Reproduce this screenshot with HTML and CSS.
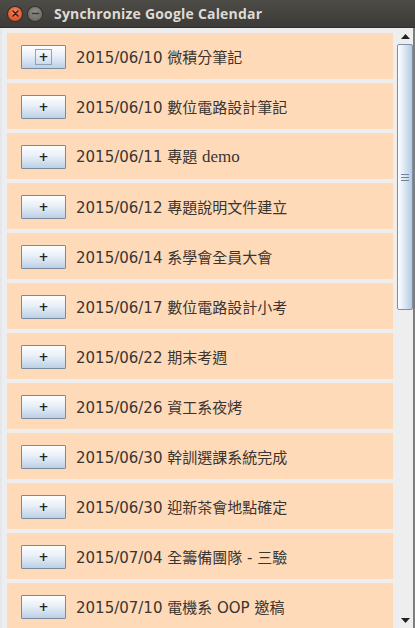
FILE: index.html
```html
<!DOCTYPE html>
<html lang="zh-Hant">
<head>
<meta charset="utf-8">
<title>Synchronize Google Calendar</title>
<link rel="stylesheet" href="styles.css">
</head>
<body>
<div class="window">
  <header class="titlebar">
    <span class="wbtn close"><svg width="9" height="9" viewBox="0 0 9 9"><path d="M2 2 L7 7 M7 2 L2 7" stroke="#3a1a10" stroke-width="1.4" stroke-linecap="round"/></svg></span>
    <span class="wbtn minimize"><svg width="9" height="9" viewBox="0 0 9 9"><path d="M1.5 4.5 H7.5" stroke="#3b3b38" stroke-width="1.6" stroke-linecap="round"/></svg></span>
    <span class="title">Synchronize Google Calendar</span>
  </header>
  <div class="body">
    <main class="list">
      <div class="row"><button class="add focused"><span class="plus">+</span></button><span class="label">2015/06/10 微積分筆記</span></div>
      <div class="row"><button class="add"><span class="plus">+</span></button><span class="label">2015/06/10 數位電路設計筆記</span></div>
      <div class="row"><button class="add"><span class="plus">+</span></button><span class="label">2015/06/11 專題 <span class="serif">demo</span></span></div>
      <div class="row"><button class="add"><span class="plus">+</span></button><span class="label">2015/06/12 專題說明文件建立</span></div>
      <div class="row"><button class="add"><span class="plus">+</span></button><span class="label">2015/06/14 系學會全員大會</span></div>
      <div class="row"><button class="add"><span class="plus">+</span></button><span class="label">2015/06/17 數位電路設計小考</span></div>
      <div class="row"><button class="add"><span class="plus">+</span></button><span class="label">2015/06/22 期末考週</span></div>
      <div class="row"><button class="add"><span class="plus">+</span></button><span class="label">2015/06/26 資工系夜烤</span></div>
      <div class="row"><button class="add"><span class="plus">+</span></button><span class="label">2015/06/30 幹訓選課系統完成</span></div>
      <div class="row"><button class="add"><span class="plus">+</span></button><span class="label">2015/06/30 迎新茶會地點確定</span></div>
      <div class="row"><button class="add"><span class="plus">+</span></button><span class="label">2015/07/04 全籌備團隊 - 三驗</span></div>
      <div class="row"><button class="add"><span class="plus">+</span></button><span class="label">2015/07/10 電機系 OOP 邀稿</span></div>
    </main>
    <div class="scrollbar">
      <div class="arrow up"><svg width="9" height="5" viewBox="0 0 9 5"><path d="M0 5 L4.5 0 L9 5 Z" fill="#222"/></svg></div>
      <div class="thumb"><span class="grip"></span><span class="grip"></span><span class="grip"></span></div>
      <div class="track"></div>
      <div class="arrow down"><svg width="9" height="5" viewBox="0 0 9 5"><path d="M0 0 L4.5 5 L9 0 Z" fill="#222"/></svg></div>
    </div>
  </div>
</div>
</body>
</html>
```

FILE: styles.css
```css
html, body {
  margin: 0;
  padding: 0;
  height: 100%;
  overflow: hidden;
}

.window {
  width: 415px;
  height: 628px;
  display: flex;
  flex-direction: column;
  background: #eeeeee;
}

.titlebar {
  height: 28px;
  flex: none;
  display: flex;
  align-items: center;
  background: linear-gradient(#4d4c47, #3c3b37);
  box-sizing: border-box;
  padding-left: 8px;
  border-bottom: 1px solid #2f2e2b;
}

.wbtn {
  width: 14px;
  height: 14px;
  border-radius: 50%;
  display: flex;
  align-items: center;
  justify-content: center;
  margin-right: 6px;
}

.close {
  background: radial-gradient(circle at 50% 35%, #f5885f, #e0542b 70%, #c8431f);
  box-shadow: 0 0 0 1px #3a2a22;
}

.minimize {
  background: radial-gradient(circle at 50% 35%, #8e8d88, #6f6e69 70%, #5c5b57);
  box-shadow: 0 0 0 1px #34332f;
}

.title {
  margin-left: 6px;
  font-family: "Open Sans", "DejaVu Sans", sans-serif;
  font-weight: bold;
  font-size: 14px;
  color: #dfdbd2;
  letter-spacing: 0.2px;
}

.body {
  flex: 1;
  display: flex;
  min-height: 0;
  border-left: 2px solid #e3e7ee;
  border-right: 2px solid #7e7e7e;
}

.list {
  flex: 1;
  display: flex;
  flex-direction: column;
  gap: 4px;
  padding: 5px 4px 0 5px;
  overflow: hidden;
}

.row {
  flex: none;
  height: 46px;
  background: #ffdab9;
  display: flex;
  align-items: center;
  padding-left: 14px;
}

.add {
  width: 45px;
  height: 24px;
  margin: 0 10px 0 0;
  padding: 0;
  box-sizing: border-box;
  border: 1px solid #7a8a9c;
  border-radius: 1px;
  background: linear-gradient(#ffffff, #e8eff7 45%, #bcd0e5);
  display: flex;
  align-items: center;
  justify-content: center;
  position: relative;
  top: 1px;
}

.plus {
  font-family: "DejaVu Sans", sans-serif;
  font-weight: bold;
  font-size: 12px;
  line-height: 12px;
  color: #222;
}

.focused .plus {
  outline: 1px solid #8da2bb;
  outline-offset: 1px;
  padding: 0 1px;
}

.label {
  font-family: "DejaVu Sans", "Noto Sans CJK TC", sans-serif;
  font-size: 15px;
  color: #3a3531;
  white-space: nowrap;
}

.serif {
  font-family: "Liberation Serif", serif;
  font-size: 17px;
}

.scrollbar {
  width: 16px;
  flex: none;
  display: flex;
  flex-direction: column;
  background: #eeeeee;
}

.arrow {
  height: 16px;
  flex: none;
  display: flex;
  align-items: center;
  justify-content: center;
}

.thumb {
  height: 266px;
  flex: none;
  box-sizing: border-box;
  border: 1px solid #7d8fa6;
  border-radius: 2px;
  background: linear-gradient(to right, #ffffff, #dde8f4 45%, #b6c9df);
  display: flex;
  flex-direction: column;
  align-items: center;
  justify-content: center;
  gap: 2px;
}

.grip {
  width: 8px;
  height: 1px;
  background: #6e83a0;
}

.track {
  flex: 1;
}
```
